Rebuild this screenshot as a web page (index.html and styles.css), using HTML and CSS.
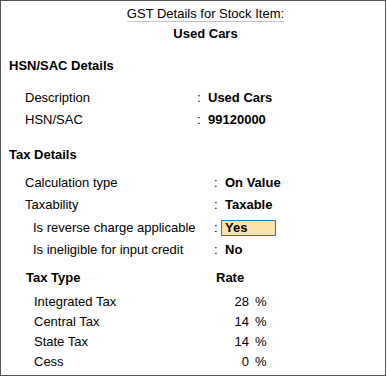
FILE: index.html
```html
<!DOCTYPE html>
<html>
    <head>
        <link rel="stylesheet" href="styles.css">
    </head>

    <body>
        <div class="gst-panel">
            <header class="head">
                <div class="head-title">GST Details for Stock Item:</div>
                <div class="head-item">Used Cars</div>
            </header>

            <section class="block hsn">
                <h1>HSN/SAC Details</h1>
                <div class="row">
                    <span class="label">Description</span>
                    <span class="sep">:</span>
                    <span class="value">Used Cars</span>
                </div>
                <div class="row">
                    <span class="label">HSN/SAC</span>
                    <span class="sep">:</span>
                    <span class="value">99120000</span>
                </div>
            </section>

            <section class="block tax">
                <h1>Tax Details</h1>
                <div class="row">
                    <span class="label">Calculation type</span>
                    <span class="sep">:</span>
                    <span class="value">On Value</span>
                </div>
                <div class="row">
                    <span class="label">Taxability</span>
                    <span class="sep">:</span>
                    <span class="value">Taxable</span>
                </div>
                <div class="row">
                    <span class="label sub">Is reverse charge applicable</span>
                    <span class="sep">:</span>
                    <span class="value"><span class="field">Yes</span></span>
                </div>
                <div class="row">
                    <span class="label sub">Is ineligible for input credit</span>
                    <span class="sep">:</span>
                    <span class="value">No</span>
                </div>
            </section>

            <section class="rates">
                <div class="rate-head">
                    <span class="type">Tax Type</span>
                    <span class="rate">Rate</span>
                </div>
                <div class="rate-row">
                    <span class="type">Integrated Tax</span>
                    <span class="rate">28</span>
                    <span class="pct">%</span>
                </div>
                <div class="rate-row">
                    <span class="type">Central Tax</span>
                    <span class="rate">14</span>
                    <span class="pct">%</span>
                </div>
                <div class="rate-row">
                    <span class="type">State Tax</span>
                    <span class="rate">14</span>
                    <span class="pct">%</span>
                </div>
                <div class="rate-row">
                    <span class="type">Cess</span>
                    <span class="rate">0</span>
                    <span class="pct">%</span>
                </div>
            </section>
        </div>
    </body>
</html>
```

FILE: styles.css
```css
html, body {
    margin: 0;
    padding: 0;
    background: #fff;
}
body {
    font-family: "Liberation Sans", Arial, sans-serif;
    font-size: 13px;
    color: #000;
}

.gst-panel {
    box-sizing: border-box;
    width: 386px;
    height: 376px;
    border: 1px solid #555;
    padding-left: 8px;
}

/* title */
.head {
    padding-left: 17px;
    text-align: center;
}
.head-title {
    display: inline-block;
    margin-top: 6px;
    line-height: 14px;
    border-bottom: 1px solid #c4c4c4;
}
.head-item {
    line-height: 24px;
    font-weight: bold;
}

/* sections */
.block > h1 {
    margin: 0;
    font-size: 13px;
    font-weight: bold;
    line-height: 22px;
}
.hsn > h1 {
    margin-top: 9px;
}
.tax > h1 {
    margin-top: 13px;
}

.row {
    display: grid;
    margin-left: 16px;
    line-height: 22px;
}
.hsn > .row {
    grid-template-columns: 172px 11px auto;
}
.hsn > h1 + .row {
    margin-top: 10px;
}
.tax > .row {
    grid-template-columns: 189px 7px auto;
    line-height: 22.4px;
}
.tax > h1 + .row {
    margin-top: 6px;
}
.tax .value {
    padding-left: 4px;
}

.label.sub {
    padding-left: 8px;
}
.sep {
    padding-left: 0;
}
.value {
    font-weight: bold;
}

.field {
    display: inline-block;
    box-sizing: border-box;
    width: 55px;
    height: 16px;
    margin-left: -4px;
    padding-left: 3px;
    line-height: 14px;
    vertical-align: middle;
    border: 1px solid #1f7cc2;
    background: #fde3a9;
}

/* rate table */
.rates {
    margin-left: 17px;
}
.rate-head, .rate-row {
    display: grid;
    grid-template-columns: 190px 33px 6px auto;
}
.rate-head {
    margin-top: 5px;
    line-height: 22px;
    font-weight: bold;
}
.rate-head .rate {
    grid-column: 2 / 5;
}
.rate-row {
    line-height: 20px;
}
.rate-head + .rate-row {
    margin-top: 3px;
}
.rate-row .type {
    padding-left: 8px;
}
.rate-row .rate {
    text-align: right;
}
.rate-row .pct {
    grid-column: 4;
}
```
